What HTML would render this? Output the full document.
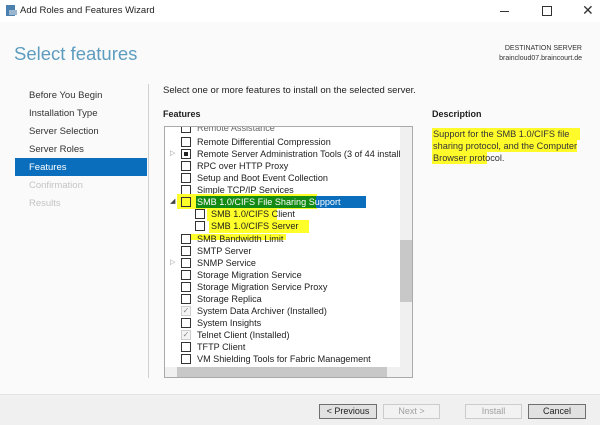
<!DOCTYPE html><html><head><style>
*{margin:0;padding:0;box-sizing:border-box}
body{width:600px;height:425px;overflow:hidden;background:#fafafa;font-family:"Liberation Sans",sans-serif;font-size:9.5px;color:#1e1e1e;position:relative}
.a{position:absolute;white-space:nowrap}
.nav{left:29px;color:#333}
.row{position:absolute;left:0;height:12px;line-height:12px;white-space:nowrap;font-size:9.1px}
.cb{position:absolute;width:10px;height:10px;border:1px solid #333;background:#fff;top:1px}
.t{position:absolute;top:0}
.btn{position:absolute;top:404px;height:15px;border:1px solid #adadad;background:#e1e1e1;text-align:center;line-height:13px;font-size:9px}
</style></head><body>
<div class="a" style="left:0;top:0;width:600px;height:22px;background:#fff"></div>
<div class="a" style="left:6px;top:5px;width:9px;height:11px;background:#4a7fb0"></div>
<div class="a" style="left:9px;top:10px;width:8px;height:5px;background:#9bb6cf"></div>
<div class="a" style="left:20px;top:5px;font-size:9.5px">Add Roles and Features Wizard</div>
<div class="a" style="left:500px;top:11px;width:9px;height:1px;background:#333"></div>
<div class="a" style="left:542px;top:6px;width:10px;height:10px;border:1px solid #333"></div>
<div class="a" style="left:582px;top:2px;font-size:14px;color:#333">✕</div>
<div class="a" style="left:14px;top:43px;font-size:18.5px;color:#5d9cbf">Select features</div>
<div class="a" style="right:18px;top:44px;font-size:7px;text-align:right;line-height:10px;color:#333">DESTINATION SERVER<br>braincloud07.braincourt.de</div>
<div class="a" style="left:148px;top:84px;width:1px;height:294px;background:#d0d0d0"></div>
<div class="a nav" style="top:90px">Before You Begin</div>
<div class="a nav" style="top:108px">Installation Type</div>
<div class="a nav" style="top:126px">Server Selection</div>
<div class="a nav" style="top:144px">Server Roles</div>
<div class="a" style="left:15px;top:158px;width:132px;height:18px;background:#0a6ebd"></div>
<div class="a nav" style="top:162px;color:#fff">Features</div>
<div class="a nav" style="top:180px;color:#c4c4c4">Confirmation</div>
<div class="a nav" style="top:198px;color:#c4c4c4">Results</div>
<div class="a" style="left:163px;top:85px">Select one or more features to install on the selected server.</div>
<div class="a" style="left:163px;top:109px;font-weight:bold;font-size:9px">Features</div>
<div class="a" style="left:432px;top:109px;font-weight:bold;font-size:9px">Description</div>
<div class="a" style="left:432px;top:128px;width:152px;height:36px;background:linear-gradient(#fffb2a,#fffb2a) 0 0/148px 12px no-repeat,linear-gradient(#fffb2a,#fffb2a) 0 12px/145px 12px no-repeat,linear-gradient(#fffb2a,#fffb2a) 0 24px/55px 12px no-repeat"></div>
<div class="a" style="left:433px;top:128px;line-height:12px;color:#333;font-size:9.2px">Support for the SMB 1.0/CIFS file<br>sharing protocol, and the Computer<br>Browser protocol.</div>
<div class="a" style="left:164px;top:126px;width:249px;height:252px;border:1px solid #aaa;background:#fff;overflow:hidden">
<div style="position:absolute;left:0;top:0;width:236px;height:242px;overflow:hidden">
<div class="row" style="top:-5px"><div class="cb" style="left:16px"></div><span class="t" style="left:32px;color:#666">Remote Assistance</span></div>
<div class="row" style="top:9px"><div class="cb" style="left:16px"></div><span class="t" style="left:32px">Remote Differential Compression</span></div>
<div class="row" style="top:21px"><span class="t" style="left:5px;font-size:7px;color:#999">▷</span><div class="cb" style="left:16px"><div style="margin:2px;width:4px;height:4px;background:#222"></div></div><span class="t" style="left:32px">Remote Server Administration Tools (3 of 44 installed)</span></div>
<div class="row" style="top:33px"><div class="cb" style="left:16px"></div><span class="t" style="left:32px">RPC over HTTP Proxy</span></div>
<div class="row" style="top:45px"><div class="cb" style="left:16px"></div><span class="t" style="left:32px">Setup and Boot Event Collection</span></div>
<div class="row" style="top:57px"><div class="cb" style="left:16px"></div><span class="t" style="left:32px">Simple TCP/IP Services</span></div>
<div class="a" style="left:12px;top:67px;width:140px;height:15px;background:#ffff29"></div>
<div class="a" style="left:31px;top:69px;width:120px;height:12px;background:#138a13"></div>
<div class="a" style="left:151px;top:69px;width:50px;height:12px;background:#0a6ebd"></div>
<div class="row" style="top:69px"><span class="t" style="left:5px;font-size:7px;color:#444">◢</span><div class="cb" style="left:16px;background:#ffff29"></div><span class="t" style="left:32px;color:#fff">SMB 1.0/CIFS File Sharing Support</span></div>
<div class="a" style="left:42px;top:81px;width:70px;height:13px;background:#ffff29"></div>
<div class="a" style="left:44px;top:93px;width:100px;height:13px;background:#ffff29"></div>
<div class="row" style="top:81px"><div class="cb" style="left:30px"></div><span class="t" style="left:46px">SMB 1.0/CIFS Client</span></div>
<div class="row" style="top:93px"><div class="cb" style="left:30px"></div><span class="t" style="left:46px">SMB 1.0/CIFS Server</span></div>
<div class="a" style="left:16px;top:107px;width:105px;height:6px;background:#ffff29"></div>
<div class="row" style="top:106px"><div class="cb" style="left:16px"></div><span class="t" style="left:32px">SMB Bandwidth Limit</span></div>
<div class="row" style="top:118px"><div class="cb" style="left:16px"></div><span class="t" style="left:32px">SMTP Server</span></div>
<div class="row" style="top:130px"><span class="t" style="left:5px;font-size:7px;color:#999">▷</span><div class="cb" style="left:16px"></div><span class="t" style="left:32px">SNMP Service</span></div>
<div class="row" style="top:142px"><div class="cb" style="left:16px"></div><span class="t" style="left:32px">Storage Migration Service</span></div>
<div class="row" style="top:154px"><div class="cb" style="left:16px"></div><span class="t" style="left:32px">Storage Migration Service Proxy</span></div>
<div class="row" style="top:166px"><div class="cb" style="left:16px"></div><span class="t" style="left:32px">Storage Replica</span></div>
<div class="row" style="top:178px"><div class="cb" style="left:16px;border-color:#ccc;background:#f4f4f4;font-size:8px;line-height:8px;color:#888;text-align:center">✓</div><span class="t" style="left:32px">System Data Archiver (Installed)</span></div>
<div class="row" style="top:190px"><div class="cb" style="left:16px"></div><span class="t" style="left:32px">System Insights</span></div>
<div class="row" style="top:202px"><div class="cb" style="left:16px;border-color:#ccc;background:#f4f4f4;font-size:8px;line-height:8px;color:#888;text-align:center">✓</div><span class="t" style="left:32px">Telnet Client (Installed)</span></div>
<div class="row" style="top:214px"><div class="cb" style="left:16px"></div><span class="t" style="left:32px">TFTP Client</span></div>
<div class="row" style="top:226px"><div class="cb" style="left:16px"></div><span class="t" style="left:32px">VM Shielding Tools for Fabric Management</span></div>
</div>
<div style="position:absolute;left:235px;top:0;width:12px;height:242px;background:#f0f0f0"><div style="position:absolute;top:113px;left:0;width:12px;height:62px;background:#c8c8c8"></div></div>
<div style="position:absolute;left:0;top:240px;width:247px;height:10px;background:#f0f0f0"><div style="position:absolute;left:12px;top:0;width:210px;height:10px;background:#c8c8c8"></div></div>
</div>
<div class="a" style="left:0;top:394px;width:600px;height:31px;background:#f0f0f0;border-top:1px solid #e3e3e3"></div>
<div class="btn" style="left:319px;width:58px;border-color:#6f6f6f">&lt; Previous</div>
<div class="btn" style="left:383px;width:57px;color:#a0a0a0;background:#f2f2f2;border-color:#ccc">Next &gt;</div>
<div class="btn" style="left:465px;width:57px;color:#a0a0a0;background:#f2f2f2;border-color:#ccc">Install</div>
<div class="btn" style="left:528px;width:58px;border-color:#6f6f6f">Cancel</div>
</body></html>
